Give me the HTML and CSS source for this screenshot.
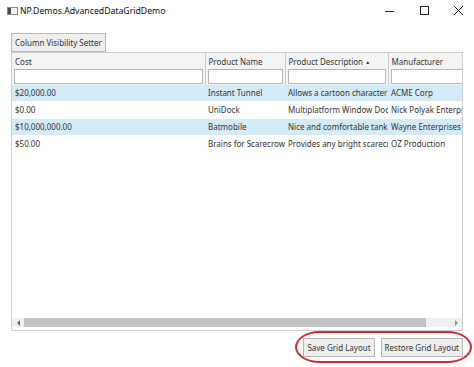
FILE: index.html
```html
<!DOCTYPE html>
<html lang="en">
<head>
    <meta charset="UTF-8">
    <title>NP.Demos.AdvancedDataGridDemo</title>
    <link rel="stylesheet" href="styles.css">
</head>
<body>
    <div class="window">
        <div class="titlebar">
            <div class="app-icon">
                <svg width="11" height="8" viewBox="0 0 11 8">
                    <rect x="0.5" y="0.5" width="10" height="7" fill="#f4f4f4" stroke="#8a8a8a"/>
                    <rect x="1" y="1" width="3" height="6" fill="#4a4a4a"/>
                </svg>
            </div>
            <div class="title">NP.Demos.AdvancedDataGridDemo</div>
            <div class="controls">
                <svg class="ctl" width="34" height="22" viewBox="0 0 34 22"><line x1="12" y1="11.5" x2="21" y2="11.5" stroke="#222" stroke-width="1"/></svg>
                <svg class="ctl" width="34" height="22" viewBox="0 0 34 22"><rect x="13.5" y="6.5" width="8" height="8" fill="none" stroke="#222" stroke-width="1"/></svg>
                <svg class="ctl" width="34" height="22" viewBox="0 0 34 22"><path d="M13 6 L22 15 M22 6 L13 15" stroke="#222" stroke-width="1"/></svg>
            </div>
        </div>

        <div class="content">
            <div class="toolbar">
                <button class="btn">Column Visibility Setter</button>
            </div>

            <div class="grid">
                <div class="grid-body">
                    <table class="data">
                        <colgroup>
                            <col style="width:193px">
                            <col style="width:80px">
                            <col style="width:103px">
                            <col style="width:110px">
                        </colgroup>
                        <thead>
                            <tr>
                                <th><div class="hlabel">Cost</div><div class="filter"></div></th>
                                <th><div class="hlabel">Product Name</div><div class="filter"></div></th>
                                <th><div class="hlabel">Product Description <span class="sort">&#9650;</span></div><div class="filter"></div></th>
                                <th><div class="hlabel">Manufacturer</div><div class="filter"></div></th>
                            </tr>
                        </thead>
                        <tbody>
                            <tr class="alt">
                                <td>$20,000.00</td>
                                <td>Instant Tunnel</td>
                                <td>Allows a cartoon character to dig a tunnel</td>
                                <td>ACME Corp</td>
                            </tr>
                            <tr>
                                <td>$0.00</td>
                                <td>UniDock</td>
                                <td>Multiplatform Window Docking</td>
                                <td>Nick Polyak Enterprises</td>
                            </tr>
                            <tr class="alt">
                                <td>$10,000,000.00</td>
                                <td>Batmobile</td>
                                <td>Nice and comfortable tank</td>
                                <td>Wayne Enterprises</td>
                            </tr>
                            <tr>
                                <td>$50.00</td>
                                <td>Brains for Scarecrow</td>
                                <td>Provides any bright scarecrow</td>
                                <td>OZ Production</td>
                            </tr>
                        </tbody>
                    </table>
                </div>
                <div class="hscroll">
                    <span class="arrow left"></span>
                    <div class="track"><div class="thumb"></div></div>
                    <span class="arrow right"></span>
                </div>
            </div>

            <div class="footer">
                <button class="btn">Save Grid Layout</button>
                <button class="btn">Restore Grid Layout</button>
                <div class="callout"></div>
            </div>
        </div>
    </div>
</body>
</html>
```

FILE: styles.css
```css
body {
    margin: 0;
    padding: 0;
    font-family: "Noto Sans", "Open Sans", sans-serif;
    font-size: 8px;
    color: #333;
    background: #fff;
}
.window {
    width: 474px;
    height: 367px;
    display: flex;
    flex-direction: column;
    background: #fff;
    overflow: hidden;
}
.titlebar {
    height: 22px;
    display: flex;
    align-items: center;
    flex-shrink: 0;
}
.app-icon {
    width: 20px;
    padding-left: 7px;
    box-sizing: border-box;
    display: flex;
    align-items: center;
}
.title {
    flex: 1;
    font-size: 8.7px;
    color: #111;
}
.controls {
    display: flex;
    margin-right: -1px;
}
.ctl {
    display: block;
}
.content {
    flex: 1;
    display: flex;
    flex-direction: column;
    padding: 11px 11px 0 11px;
    min-height: 0;
}
.toolbar {
    display: flex;
}
.btn {
    font-family: inherit;
    font-size: 8px;
    color: #333;
    background: #eeeeee;
    border: 1px solid #b8b8b8;
    padding: 0 3px;
    height: 19px;
    margin: 0;
    line-height: 17px;
}
.grid {
    height: 279px;
    border: 1px solid #cfcfcf;
    box-sizing: border-box;
    display: flex;
    flex-direction: column;
    overflow: hidden;
}
.grid-body {
    flex: 1;
    overflow: hidden;
}
.data {
    border-collapse: collapse;
    table-layout: fixed;
    width: 486px;
}
.data th {
    background: #f4f4f4;
    font-weight: normal;
    text-align: left;
    padding: 0 2px 1px 2px;
    border-right: 1px solid #c9c9c9;
    border-left: 1px solid #e2e2e2;
    vertical-align: top;
}
.data th:first-child {
    border-left: none;
}
.hlabel {
    height: 16px;
    line-height: 17px;
    padding-left: 1px;
    white-space: nowrap;
    overflow: hidden;
}
.sort {
    font-size: 5px;
    vertical-align: 1px;
}
.filter {
    height: 13px;
    border: 1px solid #b5b5b5;
    background: #fff;
}
.data td {
    height: 16px;
    padding: 0 3px;
    line-height: 16px;
    white-space: nowrap;
    overflow: hidden;
    text-overflow: clip;
    border-bottom: 1px solid transparent;
}
.data tr.alt td {
    background: #d3eaf7;
}
.hscroll {
    height: 9px;
    margin-bottom: 3px;
    display: flex;
    align-items: center;
    background: #f0f0f0;
}
.arrow {
    width: 12px;
    display: flex;
    justify-content: center;
}
.arrow.left::before {
    content: "";
    border-right: 3px solid #606060;
    border-top: 3px solid transparent;
    border-bottom: 3px solid transparent;
}
.arrow.right::before {
    content: "";
    border-left: 3px solid #909090;
    border-top: 3px solid transparent;
    border-bottom: 3px solid transparent;
}
.track {
    flex: 1;
    height: 100%;
    padding-right: 24px;
}
.thumb {
    height: 100%;
    background: #c2c2c2;
}
.footer {
    position: relative;
    display: flex;
    justify-content: flex-end;
    gap: 6px;
    padding-top: 7px;
}
.callout {
    position: absolute;
    left: 284px;
    top: 0;
    width: 177px;
    height: 32px;
    border: 2px solid #d42a33;
    border-radius: 26px / 17px;
    box-sizing: border-box;
}
```
